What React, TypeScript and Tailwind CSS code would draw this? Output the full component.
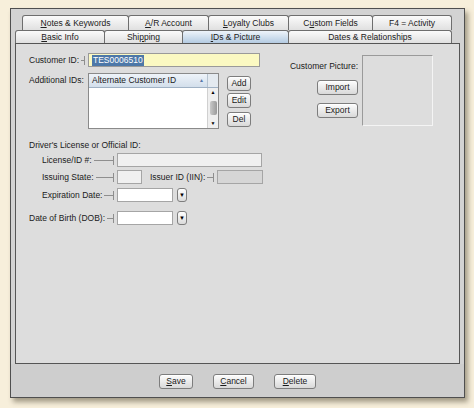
import React from "react";

const btn =
  "flex items-center justify-center h-[15px] rounded-[3px] border border-[#7d7d7d] bg-gradient-to-b from-[#fdfdfd] to-[#d9d9d9] text-[8.5px] leading-none text-[#1a1a1a] shadow-[inset_0_1px_0_#ffffff]";

function Connector() {
    return (
        <span className="flex-1 flex items-center ml-[2px] mr-[3px]">
            <span className="flex-1 h-px bg-[#8e8e8e]" />
            <span className="w-px h-[9px] bg-[#8e8e8e]" />
        </span>
    );
}

function Tab({ label, width, selected }: { label: React.ReactNode; width: number; selected?: boolean }) {
    return (
        <div
            style={{ width }}
            className={
                "flex items-center justify-center -ml-px first:ml-0 border border-b-0 border-[#6e6e6e] rounded-t-[3px] text-[8.5px] leading-none text-[#202020] " +
                (selected
                    ? "bg-gradient-to-b from-[#eef4fa] to-[#b4cbe2]"
                    : "bg-gradient-to-b from-[#fbfbfb] to-[#e0e0e0]")
            }
        >
            {label}
        </div>
    );
}

function DropBtn() {
    return (
        <div className="ml-[4px] w-[10px] h-[14px] rounded-[3px] border border-[#7d7d7d] bg-gradient-to-b from-[#ffffff] to-[#dadada] flex items-center justify-center">
            <span className="text-[6px] leading-none text-black">▼</span>
        </div>
    );
}

export default function App() {
    return (
        <div className="w-[474px] h-[408px] bg-[#f7efdb] pl-[10px] pt-[8px] font-['Liberation_Sans',Arial,sans-serif] text-[#1a1a1a]">
            <div className="w-[455px] h-[390px] border border-[#4f4f4f] bg-[#d3d3d3] flex flex-col shadow-[3px_4px_5px_rgba(60,50,30,0.45)]">
                <div className="px-[4px] pt-[6px]">
                    {/* tabs */}
                    <div className="flex h-[15px] pl-[7px]">
                        <Tab width={107} label={<span><u>N</u>otes &amp; Keywords</span>} />
                        <Tab width={81} label={<span><u>A</u>/R Account</span>} />
                        <Tab width={81} label={<span><u>L</u>oyalty Clubs</span>} />
                        <Tab width={85} label={<span>C<u>u</u>stom Fields</span>} />
                        <Tab width={80} label={<span>F4 = Activity</span>} />
                    </div>
                    <div className="flex h-[13px]">
                        <Tab width={90} label={<span><u>B</u>asic Info</span>} />
                        <Tab width={79} label={<span>Shi<u>p</u>ping</span>} />
                        <Tab width={107} selected label={<span><u>I</u>Ds &amp; Picture</span>} />
                        <Tab width={164} label={<span>Dates &amp; Relationships</span>} />
                    </div>

                    {/* panel */}
                    <div className="h-[321px] border border-[#555555] bg-[#dddddd] pl-[13px] pt-[9px] text-[8.5px] leading-[11px]">
                        <div className="flex">
                            {/* left column */}
                            <div className="w-[231px]">
                                <div className="flex items-center h-[14px]">
                                    <div className="w-[59px] flex items-center">
                                        <span>Customer ID:</span>
                                        <Connector />
                                    </div>
                                    <div className="w-[172px] h-[14px] border border-[#9a9a9a] bg-[#fbf9c2] flex items-center pl-[3px]">
                                        <span className="bg-[#4d78a8] text-white px-[1px] leading-[11px]">TES0006510</span>
                                    </div>
                                </div>
                                <div className="flex mt-[6px]">
                                    <div className="w-[59px] pt-[2px]">Additional IDs:</div>
                                    <div className="w-[131px] h-[56px] border border-[#8a8a8a] bg-white flex flex-col">
                                        <div className="h-[14px] flex border-b border-[#9fb1c4] bg-gradient-to-b from-[#eef3f9] to-[#d3dfeb]">
                                            <div className="flex-1 flex items-center justify-between pl-[3px] pr-[3px]">
                                                <span>Alternate Customer ID</span>
                                                <span className="text-[5px] text-[#5878a8]">▲</span>
                                            </div>
                                            <div className="w-[11px] border-l border-[#b6c3d0] bg-[#e4eaf0]" />
                                        </div>
                                        <div className="flex-1 flex">
                                            <div className="flex-1" />
                                            <div className="w-[11px] bg-[#efefef] border-l border-[#d0d0d0] flex flex-col items-center justify-between py-[1px]">
                                                <span className="text-[5px] leading-[7px] text-black">▲</span>
                                                <span className="w-[7px] h-[14px] rounded-[2px] bg-gradient-to-r from-[#c9c9c9] to-[#9a9a9a]" />
                                                <span className="text-[5px] leading-[7px] text-black">▼</span>
                                            </div>
                                        </div>
                                    </div>
                                    <div className="ml-[8px] flex flex-col">
                                        <div className={btn + " w-[24px] mt-[3px]"}>Add</div>
                                        <div className={btn + " w-[24px] mt-[2px]"}>Edit</div>
                                        <div className={btn + " w-[24px] mt-[4px]"}>Del</div>
                                    </div>
                                </div>
                            </div>

                            {/* right column */}
                            <div className="flex">
                                <div className="w-[98px] flex flex-col items-end">
                                    <span className="mt-[8px]">Customer Picture:</span>
                                    <div className={btn + " w-[41px] mt-[8px]"}>Import</div>
                                    <div className={btn + " w-[41px] mt-[8px]"}>Export</div>
                                </div>
                                <div className="ml-[4px] mt-[2px] w-[71px] h-[71px] border border-[#9a9a9a] border-r-[#f4f4f4] border-b-[#f4f4f4] bg-[#dddddd]" />
                            </div>
                        </div>

                        {/* driver's license */}
                        <div className="mt-[11px]">Driver's License or Official ID:</div>
                        <div className="flex items-center mt-[2px] ml-[13px]">
                            <div className="w-[75px] flex items-center">
                                <span>License/ID #:</span>
                                <Connector />
                            </div>
                            <div className="w-[145px] h-[14px] border border-[#a5a5a5] bg-[#f0f0f0]" />
                        </div>
                        <div className="flex items-center mt-[3px] ml-[13px]">
                            <div className="w-[75px] flex items-center">
                                <span>Issuing State:</span>
                                <Connector />
                            </div>
                            <div className="w-[25px] h-[14px] border border-[#a5a5a5] bg-[#f0f0f0]" />
                            <div className="ml-[8px] w-[67px] flex items-center">
                                <span>Issuer ID (IIN):</span>
                                <Connector />
                            </div>
                            <div className="w-[46px] h-[14px] border border-[#a5a5a5] bg-[#d6d6d6]" />
                        </div>
                        <div className="flex items-center mt-[4px] ml-[13px]">
                            <div className="w-[75px] flex items-center">
                                <span>Expiration Date:</span>
                                <Connector />
                            </div>
                            <div className="w-[56px] h-[14px] border border-[#a5a5a5] bg-white" />
                            <DropBtn />
                        </div>
                        <div className="flex items-center mt-[9px]">
                            <div className="w-[88px] flex items-center">
                                <span>Date of Birth (DOB):</span>
                                <Connector />
                            </div>
                            <div className="w-[56px] h-[14px] border border-[#a5a5a5] bg-white" />
                            <DropBtn />
                        </div>
                    </div>
                </div>

                {/* bottom bar */}
                <div className="flex-1 bg-[#cecece] flex items-center justify-center gap-[20px] pt-[2px]">
                    <div className={btn + " w-[34px]"}><span><u>S</u>ave</span></div>
                    <div className={btn + " w-[41px]"}><span><u>C</u>ancel</span></div>
                    <div className={btn + " w-[42px]"}><span><u>D</u>elete</span></div>
                </div>
            </div>
        </div>
    );
}
